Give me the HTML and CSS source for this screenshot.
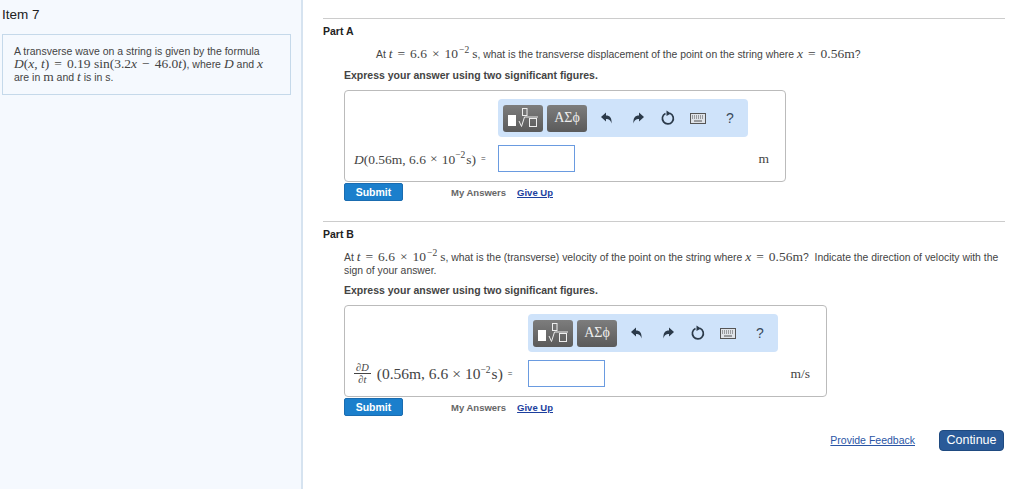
FILE: index.html
```html
<!DOCTYPE html>
<html lang="en">
<head>
  <meta charset="UTF-8">
  <meta name="viewport" content="width=device-width, initial-scale=1.0">
  <title>Item 7</title>
  <link rel="stylesheet" href="styles.css">
</head>
<body>
  <aside class="sidebar">
    <h1>Item 7</h1>
    <div class="intro">
      <p>A transverse wave on a string is given by the formula</p>
      <p><span class="math"><i>D</i>(<i>x</i>, <i>t</i>)<span class="op">=</span>0.19 sin(3.2<i>x</i><span class="op">−</span>46.0<i>t</i>)</span>, where <span class="math"><i>D</i></span> and <span class="math"><i>x</i></span></p>
      <p>are in <span class="math">m</span> and <span class="math"><i>t</i></span> is in s.</p>
    </div>
  </aside>

  <main class="content">
    <section class="part part-a">
      <h2>Part A</h2>
      <p class="question centered">At <span class="math"><i>t</i><span class="op">=</span>6.6<span class="op">×</span>10<sup>−2</sup>s</span>, what is the transverse displacement of the point on the string where <span class="math"><i>x</i><span class="op">=</span>0.56m</span>?</p>
      <p class="express">Express your answer using two significant figures.</p>
      <div class="answer-box box-a">
        <div class="toolbar">
          <div class="tool-btn tool-template">
            <svg width="38" height="24" viewBox="0 0 38 24"><rect x="4" y="9" width="8" height="11" fill="#fff"/><rect x="18.500" y="2.500" width="4.500" height="7" fill="none" stroke="#eee"/><path d="M15 15l2.500 5.500 3-9.500h13.500" fill="none" stroke="#eee"/><rect x="25.500" y="12.500" width="7" height="8" fill="none" stroke="#eee"/></svg>
          </div>
          <div class="tool-btn tool-greek">ΑΣϕ</div>
          <svg class="icon icon-undo" width="14" height="14" viewBox="0 0 14 14"><path d="M6 1.500L1 6l5 4.500V8c3 0 4.500 1 5.500 4.500C12 7 10 4.500 6 4.500z" fill="#2b3a4a"/></svg>
          <svg class="icon icon-redo" width="14" height="14" viewBox="0 0 14 14"><path d="M8 1.500L13 6l-5 4.500V8c-3 0-4.500 1-5.500 4.500C2 7 4 4.500 8 4.500z" fill="#2b3a4a"/></svg>
          <svg class="icon icon-reset" width="16" height="16" viewBox="0 0 16 16"><path d="M10 3.300A5.500 5.500 0 1 1 5.500 3.400" fill="none" stroke="#2b3a4a" stroke-width="1.700"/><path d="M6.500 0.500l4.500 3-4.500 2.500z" fill="#2b3a4a"/></svg>
          <svg class="icon icon-keys" width="16" height="11" viewBox="0 0 16 11"><rect x=".5" y=".5" width="15" height="10" fill="#dfe3e8" stroke="#555"/><path d="M2 3h12M2 5h12" stroke="#555" stroke-dasharray="1 1"/><path d="M4 8h8" stroke="#555"/></svg>
          <span class="help">?</span>
        </div>
        <div class="answer-row">
          <span class="math label"><i>D</i>(0.56m, 6.6<span class="op">×</span>10<sup>−2</sup>s)</span>
          <span class="equals">=</span>
          <span class="input"></span>
          <span class="math unit">m</span>
        </div>
      </div>
      <div class="actions">
        <button class="submit">Submit</button>
        <span class="my-answers">My Answers</span>
        <a class="give-up">Give Up</a>
      </div>
    </section>

    <section class="part part-b">
      <h2>Part B</h2>
      <p class="question">At <span class="math"><i>t</i><span class="op">=</span>6.6<span class="op">×</span>10<sup>−2</sup>s</span>, what is the (transverse) velocity of the point on the string where <span class="math"><i>x</i><span class="op">=</span>0.56m</span>? &nbsp;Indicate the direction of velocity with the sign of your answer.</p>
      <p class="express">Express your answer using two significant figures.</p>
      <div class="answer-box box-b">
        <div class="toolbar">
          <div class="tool-btn tool-template">
            <svg width="38" height="24" viewBox="0 0 38 24"><rect x="4" y="9" width="8" height="11" fill="#fff"/><rect x="18.500" y="2.500" width="4.500" height="7" fill="none" stroke="#eee"/><path d="M15 15l2.500 5.500 3-9.500h13.500" fill="none" stroke="#eee"/><rect x="25.500" y="12.500" width="7" height="8" fill="none" stroke="#eee"/></svg>
          </div>
          <div class="tool-btn tool-greek">ΑΣϕ</div>
          <svg class="icon icon-undo" width="14" height="14" viewBox="0 0 14 14"><path d="M6 1.500L1 6l5 4.500V8c3 0 4.500 1 5.500 4.500C12 7 10 4.500 6 4.500z" fill="#2b3a4a"/></svg>
          <svg class="icon icon-redo" width="14" height="14" viewBox="0 0 14 14"><path d="M8 1.500L13 6l-5 4.500V8c-3 0-4.500 1-5.500 4.500C2 7 4 4.500 8 4.500z" fill="#2b3a4a"/></svg>
          <svg class="icon icon-reset" width="16" height="16" viewBox="0 0 16 16"><path d="M10 3.300A5.500 5.500 0 1 1 5.500 3.400" fill="none" stroke="#2b3a4a" stroke-width="1.700"/><path d="M6.500 0.500l4.500 3-4.500 2.500z" fill="#2b3a4a"/></svg>
          <svg class="icon icon-keys" width="16" height="11" viewBox="0 0 16 11"><rect x=".5" y=".5" width="15" height="10" fill="#dfe3e8" stroke="#555"/><path d="M2 3h12M2 5h12" stroke="#555" stroke-dasharray="1 1"/><path d="M4 8h8" stroke="#555"/></svg>
          <span class="help">?</span>
        </div>
        <div class="answer-row">
          <span class="fraction math"><i class="num">∂D</i><i class="den">∂t</i></span>
          <span class="math label">(0.56m, 6.6<span class="op">×</span>10<sup>−2</sup>s)</span>
          <span class="equals">=</span>
          <span class="input"></span>
          <span class="math unit">m/s</span>
        </div>
      </div>
      <div class="actions">
        <button class="submit">Submit</button>
        <span class="my-answers">My Answers</span>
        <a class="give-up">Give Up</a>
      </div>
    </section>

    <div class="footer-links">
      <a class="feedback">Provide Feedback</a>
      <button class="continue">Continue</button>
    </div>
  </main>
</body>
</html>
```

FILE: styles.css
```css
html, body {
  height: 100%;
}

body {
  margin: 0;
  display: flex;
  height: 489px;
  overflow: hidden;
  font-family: "Liberation Sans", Arial, sans-serif;
  color: #333;
  background: #fff;
}

.math {
  font-family: "Liberation Serif", "Times New Roman", serif;
  font-size: 13.500px;
  line-height: 0;
  color: #444;
}

.op {
  margin: 0 5px;
}

sup {
  font-size: 9.500px;
  line-height: 0;
  margin: 0 3px 0 1px;
}

.sidebar {
  width: 303px;
  box-sizing: border-box;
  flex: none;
  padding: 6px 10px 0 2px;
  background: #f5f9fe;
  border-right: 2px solid #d6e3f0;
}

.sidebar h1 {
  margin: 0 0 11px;
  font-size: 13.500px;
  font-weight: normal;
  line-height: 17px;
  color: #222;
}

.intro {
  box-sizing: border-box;
  width: 289px;
  height: 61px;
  padding: 10px 0 0 11px;
  border: 1px solid #c5d9ea;
  font-size: 10.500px;
  line-height: 13px;
  color: #444;
}

.intro p {
  margin: 0;
}

.content {
  flex: 1;
  padding: 18px 19px 0 20px;
}

.part {
  border-top: 1px solid #ccc;
}

.part-a {
  height: 202px;
}

.part-b {
  height: 200px;
}

h2 {
  margin: 0;
  padding-top: 5px;
  font-size: 10.500px;
  line-height: 14px;
  font-weight: bold;
  color: #222;
}

.question {
  margin: 10px 0 0 21px;
  font-size: 10.400px;
  line-height: 13px;
  color: #444;
}

.question.centered {
  padding-left: 32px;
}

.express {
  margin: 7px 0 0 21px;
  font-size: 10.500px;
  font-weight: bold;
  line-height: 13px;
  color: #444;
}

.part-a .express {
  margin-top: 8px;
}

.answer-box {
  box-sizing: border-box;
  height: 92px;
  margin: 8px 0 0 21px;
  padding-top: 8px;
  border: 1px solid #bbb;
  border-radius: 4px;
}

.box-a {
  width: 442px;
}

.box-b {
  width: 483px;
}

.toolbar {
  display: flex;
  align-items: center;
  width: 250px;
  height: 38px;
  box-sizing: border-box;
  padding-left: 5px;
  background: #cfe3fa;
  border-radius: 4px;
}

.box-a .toolbar {
  margin-left: 153px;
}

.box-b .toolbar {
  margin-left: 183px;
}

.tool-btn {
  display: flex;
  align-items: center;
  justify-content: center;
  box-sizing: border-box;
  height: 27px;
  border-radius: 3px;
  background: linear-gradient(#7d7d7d, #5a5a5a);
  color: #eee;
}

.tool-template {
  width: 40px;
}

.tool-greek {
  width: 40px;
  margin-left: 4px;
  font-family: "Liberation Serif", serif;
  font-size: 14px;
}

.icon {
  flex: none;
}

.icon-undo {
  margin-left: 13px;
}

.icon-redo {
  margin-left: 17px;
}

.icon-reset {
  margin-left: 15px;
}

.icon-keys {
  margin-left: 14px;
}

.help {
  margin-left: 20px;
  font-size: 14px;
  color: #3a4a5a;
}

.answer-row {
  display: flex;
  align-items: center;
  height: 27px;
  margin-top: 8px;
  padding-left: 9px;
}

.answer-row .op {
  margin: 0 4px;
}

.answer-row sup {
  margin: 0 1px 0 0;
}

.label {
  padding-bottom: 3px;
}

.box-a .label {
  font-size: 13.500px;
}

.box-b .label {
  font-size: 15.500px;
}

.equals {
  margin-left: 5px;
  font-size: 8px;
  color: #444;
}

.input {
  box-sizing: border-box;
  width: 77px;
  height: 27px;
  border: 1px solid #6a9be0;
  background: #fff;
}

.box-a .input {
  margin-left: 12px;
}

.box-b .input {
  margin-left: 16px;
}

.unit {
  margin-left: auto;
  margin-right: 16px;
}

.fraction {
  display: flex;
  flex-direction: column;
  align-items: center;
  margin-right: 6px;
  font-size: 10.500px;
  line-height: 11px;
}

.fraction .num {
  border-bottom: 1px solid #444;
  padding: 0 2px;
}

.actions {
  display: flex;
  align-items: center;
  margin: 1px 0 0 21px;
  height: 18px;
}

.submit {
  width: 59px;
  height: 18px;
  padding: 0;
  border: 1px solid #1a6cb0;
  border-radius: 2px;
  background: #1b7fcc;
  color: #fff;
  font-family: inherit;
  font-size: 10.500px;
  font-weight: bold;
}

.my-answers {
  margin-left: 48px;
  font-size: 9.500px;
  font-weight: bold;
  color: #666;
}

.give-up {
  margin-left: 11px;
  font-size: 9.500px;
  font-weight: bold;
  color: #1c3f9e;
  text-decoration: underline;
}

.footer-links {
  display: flex;
  align-items: center;
  justify-content: flex-end;
  height: 22px;
  margin-top: 7px;
  padding-right: 1px;
}

.feedback {
  margin-right: 24px;
  font-size: 10.500px;
  color: #2a55a5;
  text-decoration: underline;
}

.continue {
  width: 65px;
  height: 21px;
  padding: 0;
  border: 1px solid #1f4a80;
  border-radius: 4px;
  background: #2a5a98;
  color: #fff;
  font-family: inherit;
  font-size: 12.500px;
}
```
